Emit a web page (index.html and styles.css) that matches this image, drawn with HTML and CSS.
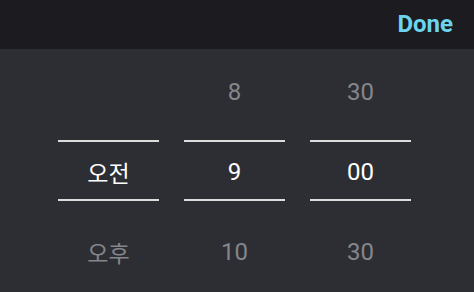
FILE: index.html
```html
<!DOCTYPE html>
<html lang="ko">
<head>
    <meta charset="utf-8">
    <title>Time Picker</title>
    <link rel="stylesheet" href="styles.css">
</head>
<body>
    <div class="picker">
        <div class="picker-header">
            <button class="done-btn">Done</button>
        </div>

        <div class="picker-wheels">
            <div class="wheel">
                <div class="wheel-item prev"></div>
                <div class="wheel-item selected ko">오전</div>
                <div class="wheel-item next ko">오후</div>
            </div>
            <div class="wheel">
                <div class="wheel-item prev">8</div>
                <div class="wheel-item selected">9</div>
                <div class="wheel-item next">10</div>
            </div>
            <div class="wheel">
                <div class="wheel-item prev">30</div>
                <div class="wheel-item selected">00</div>
                <div class="wheel-item next">30</div>
            </div>
        </div>
    </div>
</body>
</html>
```

FILE: styles.css
```css
body {
    margin: 0;
    font-family: Roboto, "Noto Sans CJK KR", sans-serif;
    background-color: #2d2e33;
}

.picker {
    width: 474px;
    height: 292px;
    background-color: #2d2e33;
    overflow: hidden;
}

.picker-header {
    height: 49px;
    background-color: #1c1b20;
    display: flex;
    justify-content: flex-end;
    align-items: center;
    padding-right: 21px;
}

.done-btn {
    background: none;
    border: none;
    padding: 0;
    font-family: Roboto, sans-serif;
    font-size: 24px;
    font-weight: 700;
    line-height: 49px;
    color: #6cd4ee;
    cursor: pointer;
}

.picker-wheels {
    display: flex;
    gap: 25px;
    padding-left: 58px;
}

.wheel {
    width: 101px;
    display: flex;
    flex-direction: column;
}

.wheel-item {
    height: 40px;
    line-height: 40px;
    font-size: 24px;
    text-align: center;
    color: #85868b;
}

.wheel-item.prev {
    margin-top: 23px;
    margin-bottom: 28px;
}

.wheel-item.selected {
    height: 57px;
    line-height: 60px;
    color: #ffffff;
    border-top: 2px solid #dcdcdc;
    border-bottom: 2px solid #dcdcdc;
}

.wheel-item.next {
    margin-top: 31px;
}

.ko {
    font-family: "Noto Sans CJK KR", sans-serif;
    font-size: 23px;
}
```
